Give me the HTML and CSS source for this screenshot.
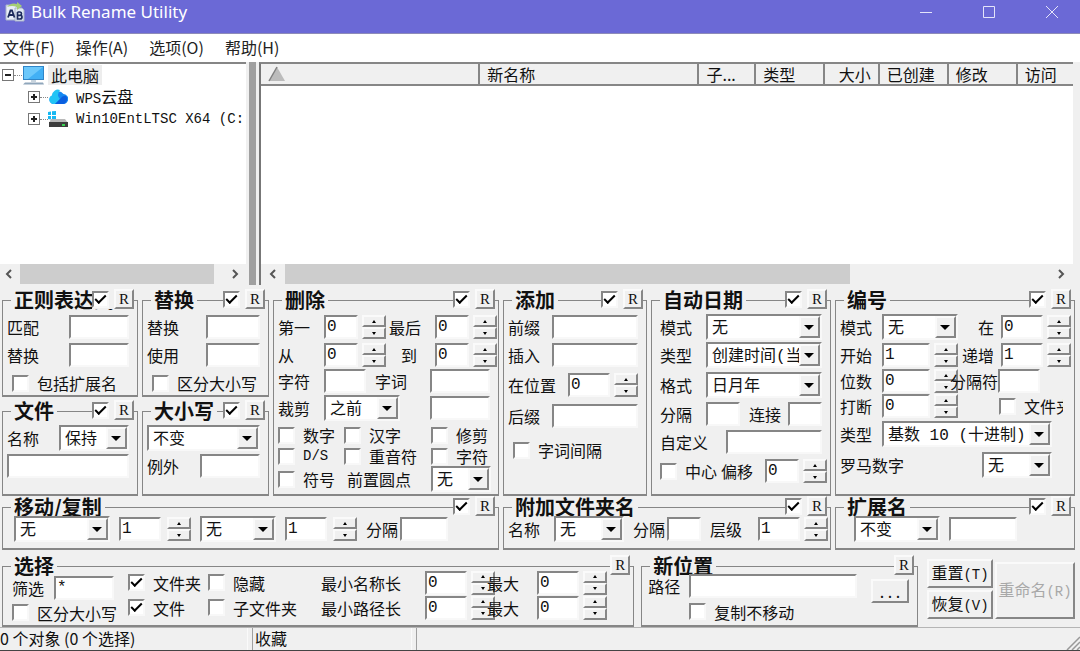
FILE: index.html
```html
<!DOCTYPE html>
<html lang="zh-CN">
<head>
  <meta charset="UTF-8">
  <title>Bulk Rename Utility</title>
  <meta name="viewport" content="width=device-width, initial-scale=1.0">
  <link rel="stylesheet" href="styles.css">
</head>
<body>
  <header class="titlebar">
    <svg class="app-icon" width="20" height="20" viewBox="0 0 20 20">
      <path d="M1 3h9l3 3v12H1z" fill="#e8eef8" stroke="#a9b4c8"/>
      <path d="M10 6h7l2 2v11h-9z" fill="#dfe7f4" stroke="#a9b4c8"/>
      <path d="M2 5Q6 0 12 2V0l5 4-5 4V5Q7 3 2 5z" fill="#a5cf74"/>
      <path d="M3 15.500L5.500 8.500h1.500L9.500 15.500M4.500 13h3.500" fill="none" stroke="#1c2b5c" stroke-width="1.800"/>
      <path d="M12.500 10v7h2.500q2 0 2-2t-2-1.700h-2.500M15 13.300q1.500 0 1.500-1.600T15 10h-2.500" fill="none" stroke="#1c2b5c" stroke-width="1.700"/>
    </svg>
    <h1 class="title">Bulk Rename Utility</h1>
    <div class="window-buttons">
      <button type="button" aria-label="最小化"><svg width="14" height="14" viewBox="0 0 14 14"><path d="M1 7.500h12"/></svg></button>
      <button type="button" aria-label="最大化"><svg width="14" height="14" viewBox="0 0 14 14"><path d="M1.500 1.500h11v11h-11z"/></svg></button>
      <button type="button" aria-label="关闭"><svg width="14" height="14" viewBox="0 0 14 14"><path d="M1 1l12 12M13 1L1 13"/></svg></button>
    </div>
  </header>

  <nav class="menu">
    <a href="#">文件(F)</a>
    <a href="#">操作(A)</a>
    <a href="#">选项(O)</a>
    <a href="#">帮助(H)</a>
  </nav>

  <main class="panes">
    <section class="tree-pane">
      <ul class="tree">
        <li>
          <span class="toggle open"></span><span class="dots"></span>
          <svg class="node-icon" width="24" height="22" viewBox="0 0 24 22">
            <path d="M1 2h21v14H1z" fill="#2f86c9"/>
            <path d="M2 3h19v12H2z" fill="#42b0f5"/>
            <path d="M2 3h19L6 15H2z" fill="#6cc8fb"/>
            <path d="M9 16h5v2H9z" fill="#c8d4de"/>
            <path d="M3 18.500h18l1 2H1z" fill="#8fa6bb"/>
          </svg>
          <span class="node selected">此电脑</span>
        </li>
        <li class="child">
          <span class="toggle"></span><span class="dots"></span>
          <svg class="node-icon" width="20" height="20" viewBox="0 0 20 20">
            <path d="M5 17a4.500 4.500 0 0 1-1-8.500A6.500 6.500 0 0 1 15.500 7 5 5 0 0 1 15 17z" fill="#1588f2"/>
            <path d="M5 17a4.500 4.500 0 0 1-1-8.500A6 6 0 0 1 12 3Q8 8 12 12L7 17z" fill="#22c4f5"/>
            <path d="M7 17l5-5q3-4 6-3a5 5 0 0 1-3 8z" fill="#0a5fe0"/>
          </svg>
          <span class="node"><span class="en">WPS</span>云盘</span>
        </li>
        <li class="child">
          <span class="toggle"></span><span class="dots"></span>
          <svg class="node-icon" width="20" height="20" viewBox="0 0 20 20">
            <path d="M0 3l3-.500v3.500H0zM4 2.300L8 2v4H4zM0 7h3v3.500L0 10zM4 7h4v4l-4-.500z" fill="#17b8f2"/>
            <path d="M3 10h14l3 4H1z" fill="#b9b9b9"/>
            <path d="M1 13h19v5H1z" fill="#3d3d3d"/>
            <path d="M14 15h3v2h-3z" fill="#39d353"/>
          </svg>
          <span class="node en">Win10EntLTSC X64 (C:)</span>
        </li>
      </ul>
      <div class="scrollbar">
        <svg width="20" height="20" viewBox="0 0 20 20"><path d="M11 6l-4 4 4 4"/></svg>
        <div class="track"><div class="thumb"></div></div>
        <svg width="20" height="20" viewBox="0 0 20 20"><path d="M7 6l4 4-4 4"/></svg>
      </div>
    </section>
    <div class="sash"></div>
    <section class="list-pane">
      <table class="files">
        <thead>
          <tr>
            <th class="col-name"><svg width="18" height="16" viewBox="0 0 18 16"><path d="M1 15L9 1l8 14z" fill="#bcbcbc"/><path d="M1 15L9 1" stroke="#808080" stroke-width="1.500"/></svg></th>
            <th class="col-new">新名称</th>
            <th class="col-sub">子...</th>
            <th class="col-type">类型</th>
            <th class="col-size">大小</th>
            <th class="col-date">已创建</th>
            <th class="col-date">修改</th>
            <th>访问</th>
          </tr>
        </thead>
      </table>
      <div class="scrollbar">
        <svg width="24" height="20" viewBox="0 0 24 20"><path d="M14 6l-4 4 4 4"/></svg>
        <div class="track"><div class="thumb wide"></div></div>
        <svg width="24" height="20" viewBox="0 0 24 20"><path d="M10 6l4 4-4 4"/></svg>
      </div>
    </section>
  </main>

  <form class="settings">
    <div class="options">
      <fieldset class="group short">
        <legend>正则表达式</legend>
        <div class="tools"><input type="checkbox" aria-label="启用正则表达式" checked><button type="button" class="reset">R</button></div>
        <div class="rows">
          <div class="row"><label for="reMatch">匹配</label><input type="text" id="reMatch" class="w60 end"></div>
          <div class="row"><label for="reReplace">替换</label><input type="text" id="reReplace" class="w60 end"></div>
          <div class="row"><label class="check indent"><input type="checkbox">包括扩展名</label></div>
        </div>
      </fieldset>

      <fieldset class="group short">
        <legend>替换</legend>
        <div class="tools"><input type="checkbox" aria-label="启用替换" checked><button type="button" class="reset">R</button></div>
        <div class="rows">
          <div class="row"><label for="repFrom">替换</label><input type="text" id="repFrom" class="w54 end"></div>
          <div class="row"><label for="repTo">使用</label><input type="text" id="repTo" class="w54 end"></div>
          <div class="row"><label class="check indent"><input type="checkbox">区分大小写</label></div>
        </div>
      </fieldset>

      <fieldset class="group tall">
        <legend>删除</legend>
        <div class="tools"><input type="checkbox" aria-label="启用删除" checked><button type="button" class="reset">R</button></div>
        <div class="rows rows-remove">
          <div class="row">
            <label for="rmFirst" class="l46">第一</label><input type="text" id="rmFirst" class="w34" value="0"><span class="spin"><button type="button" aria-label="增加"></button><button type="button" aria-label="减少"></button></span>
            <label for="rmLast" class="l46">最后</label><input type="text" id="rmLast" class="w34" value="0"><span class="spin"><button type="button" aria-label="增加"></button><button type="button" aria-label="减少"></button></span>
          </div>
          <div class="row">
            <label for="rmFrom" class="l46">从</label><input type="text" id="rmFrom" class="w34" value="0"><span class="spin"><button type="button" aria-label="增加"></button><button type="button" aria-label="减少"></button></span>
            <label for="rmTo" class="l46 push">到</label><input type="text" id="rmTo" class="w34" value="0"><span class="spin"><button type="button" aria-label="增加"></button><button type="button" aria-label="减少"></button></span>
          </div>
          <div class="row">
            <label for="rmChars" class="l46">字符</label><input type="text" id="rmChars" class="w42">
            <label for="rmWords" class="near">字词</label><input type="text" id="rmWords" class="w60 end">
          </div>
          <div class="row">
            <label for="rmCrop" class="l46">裁剪</label><span class="combo w76"><select id="rmCrop"><option>之前</option></select></span>
            <input type="text" class="w60 end" aria-label="裁剪内容">
          </div>
          <div class="row checks">
            <label class="check"><input type="checkbox">数字</label>
            <label class="check"><input type="checkbox">汉字</label>
            <label class="check"><input type="checkbox">修剪</label>
          </div>
          <div class="row checks">
            <label class="check"><input type="checkbox"><span class="en">D/S</span></label>
            <label class="check"><input type="checkbox">重音符</label>
            <label class="check"><input type="checkbox">字符</label>
          </div>
          <div class="row checks">
            <label class="check"><input type="checkbox">符号</label>
            <label for="rmDots">前置圆点</label>
            <span class="combo w60"><select id="rmDots"><option>无</option></select></span>
          </div>
        </div>
      </fieldset>

      <fieldset class="group tall">
        <legend>添加</legend>
        <div class="tools"><input type="checkbox" aria-label="启用添加" checked><button type="button" class="reset">R</button></div>
        <div class="rows rows-add">
          <div class="row"><label for="addPrefix">前缀</label><input type="text" id="addPrefix" class="w86 end"></div>
          <div class="row"><label for="addInsert">插入</label><input type="text" id="addInsert" class="w86 end"></div>
          <div class="row"><label for="addAt">在位置</label><input type="text" id="addAt" class="w42 end" value="0"><span class="spin"><button type="button" aria-label="增加"></button><button type="button" aria-label="减少"></button></span></div>
          <div class="row"><label for="addSuffix">后缀</label><input type="text" id="addSuffix" class="w86 end"></div>
          <div class="row"><label class="check indent"><input type="checkbox">字词间隔</label></div>
        </div>
      </fieldset>

      <fieldset class="group tall">
        <legend>自动日期</legend>
        <div class="tools"><input type="checkbox" aria-label="启用自动日期" checked><button type="button" class="reset">R</button></div>
        <div class="rows rows-date">
          <div class="row"><label for="dateMode" class="l46">模式</label><span class="combo grow"><select id="dateMode"><option>无</option></select></span></div>
          <div class="row"><label for="dateType" class="l46">类型</label><span class="combo grow"><select id="dateType"><option>创建时间(当前)</option></select></span></div>
          <div class="row"><label for="dateFormat" class="l46">格式</label><span class="combo grow"><select id="dateFormat"><option>日月年</option></select></span></div>
          <div class="row"><label for="dateSep" class="l46">分隔</label><input type="text" id="dateSep" class="w34"><label for="dateJoin" class="near">连接</label><input type="text" id="dateJoin" class="w34 end"></div>
          <div class="row"><label for="dateCustom">自定义</label><input type="text" id="dateCustom" class="w96 end"></div>
          <div class="row"><label class="check">  <input type="checkbox">中心</label><label for="dateOff" class="gap-left">偏移</label><input type="text" id="dateOff" class="w34 end" value="0"><span class="spin"><button type="button" aria-label="增加"></button><button type="button" aria-label="减少"></button></span></div>
        </div>
      </fieldset>

      <fieldset class="group tall">
        <legend>编号</legend>
        <div class="tools"><input type="checkbox" aria-label="启用编号" checked><button type="button" class="reset">R</button></div>
        <div class="rows rows-number">
          <div class="row">
            <label for="numMode" class="l42">模式</label><span class="combo w76"><select id="numMode"><option>无</option></select></span>
            <label for="numAt" class="end">在</label><input type="text" id="numAt" class="w42" value="0"><span class="spin"><button type="button" aria-label="增加"></button><button type="button" aria-label="减少"></button></span>
          </div>
          <div class="row">
            <label for="numStart" class="l42">开始</label><input type="text" id="numStart" class="w48" value="1"><span class="spin"><button type="button" aria-label="增加"></button><button type="button" aria-label="减少"></button></span>
            <label for="numIncr" class="end">递增</label><input type="text" id="numIncr" class="w42" value="1"><span class="spin"><button type="button" aria-label="增加"></button><button type="button" aria-label="减少"></button></span>
          </div>
          <div class="row">
            <label for="numPad" class="l42">位数</label><input type="text" id="numPad" class="w48" value="0"><span class="spin"><button type="button" aria-label="增加"></button><button type="button" aria-label="减少"></button></span>
            <label for="numSep" class="over">分隔符</label><input type="text" id="numSep" class="w42">
          </div>
          <div class="row">
            <label for="numBreak" class="l42">打断</label><input type="text" id="numBreak" class="w48" value="0"><span class="spin"><button type="button" aria-label="增加"></button><button type="button" aria-label="减少"></button></span>
            <label class="check clipped"><input type="checkbox">文件夹</label>
          </div>
          <div class="row"><label for="numType" class="l42">类型</label><span class="combo w170"><select id="numType"><option>基数 10 (十进制)</option></select></span></div>
          <div class="row"><label for="numRoman">罗马数字</label><span class="combo w70 inset"><select id="numRoman"><option>无</option></select></span></div>
        </div>
      </fieldset>

      <fieldset class="group file">
        <legend>文件</legend>
        <div class="tools"><input type="checkbox" aria-label="启用文件" checked><button type="button" class="reset">R</button></div>
        <div class="rows">
          <div class="row"><label for="fileName">名称</label><span class="combo w70 end"><select id="fileName"><option>保持</option></select></span></div>
          <div class="row"><input type="text" class="grow" aria-label="文件名称"></div>
        </div>
      </fieldset>

      <fieldset class="group case">
        <legend>大小写</legend>
        <div class="tools"><input type="checkbox" aria-label="启用大小写" checked><button type="button" class="reset">R</button></div>
        <div class="rows">
          <div class="row"><span class="combo grow"><select aria-label="大小写"><option>不变</option></select></span></div>
          <div class="row"><label for="caseExcept">例外</label><input type="text" id="caseExcept" class="w60 end"></div>
        </div>
      </fieldset>

      <fieldset class="group flat span3">
        <legend>移动/复制</legend>
        <div class="tools"><input type="checkbox" aria-label="启用移动/复制" checked><button type="button" class="reset">R</button></div>
        <div class="row wide-gap">
          <span class="combo w96"><select aria-label="移动来源"><option>无</option></select></span>
          <span class="pair"><input type="text" class="w42" aria-label="来源字符数" value="1"><span class="spin"><button type="button" aria-label="增加"></button><button type="button" aria-label="减少"></button></span></span>
          <span class="combo w76"><select aria-label="移动目标"><option>无</option></select></span>
          <span class="pair"><input type="text" class="w42" aria-label="目标位置" value="1"><span class="spin"><button type="button" aria-label="增加"></button><button type="button" aria-label="减少"></button></span></span>
          <span class="pair"><label for="moveSep">分隔</label><input type="text" id="moveSep" class="w48"></span>
        </div>
      </fieldset>

      <fieldset class="group flat span2">
        <legend>附加文件夹名</legend>
        <div class="tools"><input type="checkbox" aria-label="启用附加文件夹名" checked><button type="button" class="reset">R</button></div>
        <div class="row">
          <label for="dirName" class="l46">名称</label><span class="combo w70"><select id="dirName"><option>无</option></select></span>
          <span class="pair near"><label for="dirSep">分隔</label><input type="text" id="dirSep" class="w34"></span>
          <label for="dirLevel" class="near">层级</label><input type="text" id="dirLevel" class="w42 end" value="1"><span class="spin"><button type="button" aria-label="增加"></button><button type="button" aria-label="减少"></button></span>
        </div>
      </fieldset>

      <fieldset class="group flat extension">
        <legend>扩展名</legend>
        <div class="tools"><input type="checkbox" aria-label="启用扩展名" checked><button type="button" class="reset">R</button></div>
        <div class="row">
          <span class="combo w86"><select aria-label="扩展名"><option>不变</option></select></span>
          <input type="text" class="w68 near" aria-label="新扩展名">
        </div>
      </fieldset>
    </div>

    <div class="bottom">
      <fieldset class="group select">
        <legend>选择</legend>
        <div class="tools"><button type="button" class="reset">R</button></div>
        <div class="filters">
          <div class="filter-col first">
            <div class="row"><label for="filter" class="l42">筛选</label><input type="text" id="filter" class="w60" value="*"></div>
            <label class="check"><input type="checkbox">区分大小写</label>
          </div>
          <div class="filter-col">
            <label class="check"><input type="checkbox" checked>文件夹</label>
            <label class="check"><input type="checkbox" checked>文件</label>
          </div>
          <div class="filter-col">
            <label class="check"><input type="checkbox">隐藏</label>
            <label class="check"><input type="checkbox">子文件夹</label>
          </div>
          <div class="filter-col">
            <div class="row">
              <label for="minName" class="l104">最小名称长</label><input type="text" id="minName" class="w42" value="0"><span class="spin"><button type="button" aria-label="增加"></button><button type="button" aria-label="减少"></button></span>
              <label for="maxName" class="over l50">最大</label><input type="text" id="maxName" class="w42" value="0"><span class="spin"><button type="button" aria-label="增加"></button><button type="button" aria-label="减少"></button></span>
            </div>
            <div class="row">
              <label for="minPath" class="l104">最小路径长</label><input type="text" id="minPath" class="w42" value="0"><span class="spin"><button type="button" aria-label="增加"></button><button type="button" aria-label="减少"></button></span>
              <label for="maxPath" class="over l50">最大</label><input type="text" id="maxPath" class="w42" value="0"><span class="spin"><button type="button" aria-label="增加"></button><button type="button" aria-label="减少"></button></span>
            </div>
          </div>
        </div>
      </fieldset>

      <fieldset class="group location">
        <legend>新位置</legend>
        <div class="tools"><button type="button" class="reset">R</button></div>
        <div class="location-body">
          <label for="path">路径</label>
          <input type="text" id="path">
          <button type="button" class="btn browse">. . .</button>
          <label class="check"><input type="checkbox">复制不移动</label>
        </div>
      </fieldset>

      <div class="actions">
        <div class="action-stack">
          <button type="reset" class="btn">重置<span class="en">(T)</span></button>
          <button type="button" class="btn">恢复<span class="en">(V)</span></button>
        </div>
        <button type="submit" class="btn rename" disabled>重命名<span class="en">(R)</span></button>
      </div>
    </div>
  </form>

  <footer class="status">
    <div class="status-count">0 个对象 (0 个选择)</div>
    <div class="status-fav">收藏</div>
    <div class="status-rest">
      <svg class="grip" width="14" height="14" viewBox="0 0 14 14"><path d="M1 14L14 1M6 14l8-8M11 14l3-3" stroke="#999" stroke-width="1.500"/></svg>
    </div>
  </footer>
</body>
</html>
```

FILE: styles.css
```css
*,
*::before,
*::after {
  box-sizing: border-box;
}
body {
  margin: 0;
  min-height: 100vh;
  display: flex;
  flex-direction: column;
  overflow-x: hidden;
  background-color: #f0f0f0;
  color: #111;
  font-family: "Noto Sans CJK SC", "Liberation Sans", sans-serif;
  font-size: 16px;
  line-height: 20px;
}
button,
input,
select {
  font: inherit;
  color: inherit;
  margin: 0;
  padding: 0;
  border-radius: 0;
}
.en {
  font-family: "Liberation Mono", monospace;
  font-size: 14px;
}

/* title bar */
.titlebar {
  display: flex;
  align-items: flex-start;
  height: 34px;
  padding: 2px 1px 0 5px;
  background-color: #6b69d6;
  border-bottom: 1px solid #8d8bb8;
  color: #fff;
}
.title {
  margin: 0 auto 0 6px;
  font-family: "Noto Sans", sans-serif;
  font-size: 17px;
  font-weight: 400;
  line-height: 20px;
}
.window-buttons {
  display: flex;
  gap: 9px;
}
.window-buttons button {
  width: 54px;
  height: 20px;
  border: none;
  background: none;
}
.window-buttons svg {
  display: block;
  margin: 0 auto;
  fill: none;
  stroke: #e4e4fa;
}

/* menu */
.menu {
  display: flex;
  gap: 21px;
  height: 28px;
  padding: 3px;
  background-color: #fff;
}
.menu a {
  color: #222;
  text-decoration: none;
}

/* tree and file list */
.panes {
  flex: 1;
  display: flex;
  padding-bottom: 5px;
}
.tree-pane,
.list-pane {
  display: flex;
  flex-direction: column;
  justify-content: space-between;
  min-width: 0;
  background-color: #fff;
  border-top: 2px solid #868686;
}
.tree-pane {
  width: 246px;
}
.sash {
  width: 7px;
  margin: 0 3px;
  background-color: #a0a0a0;
}
.list-pane {
  flex: 1;
  margin-right: 7px;
  border-left: 2px solid #777;
}
.tree {
  list-style: none;
  margin: 0;
  padding: 0 0 0 2px;
  overflow: hidden;
}
.tree li {
  display: flex;
  align-items: center;
  height: 22px;
}
.tree .child {
  padding-left: 26px;
}
.toggle {
  position: relative;
  flex: none;
  width: 12px;
  height: 12px;
  border: 1px solid #777;
}
.toggle::before,
.toggle:not(.open)::after {
  content: "";
  position: absolute;
  left: 2px;
  top: 4px;
  width: 6px;
  height: 2px;
  background-color: #222;
}
.toggle:not(.open)::after {
  transform: rotate(90deg);
}
.dots {
  flex: none;
  width: 8px;
  border-top: 1px dotted #888;
}
.node-icon {
  flex: none;
}
.node {
  padding: 0 3px;
  margin-left: 2px;
  white-space: nowrap;
}
.child .node {
  margin-left: 5px;
}
.selected {
  background-color: #ededed;
}
.scrollbar {
  display: flex;
  height: 21px;
  background-color: #f0f0f0;
}
.scrollbar svg {
  flex: none;
  fill: none;
  stroke: #555;
  stroke-width: 2;
}
.track {
  flex: 1;
}
.thumb {
  width: 94%;
  height: 20px;
  background-color: #cdcdcd;
}
.thumb.wide {
  width: 74%;
}
.files {
  width: 100%;
  table-layout: fixed;
  border-collapse: separate;
  border-spacing: 0;
}
.files th {
  height: 22px;
  padding: 0 7px;
  overflow: hidden;
  white-space: nowrap;
  text-align: left;
  font-weight: 400;
  line-height: 18px;
  background-color: #f0f0f0;
  border-right: 2px solid #868686;
  border-bottom: 2px solid #868686;
}
.files th:last-child {
  border-right: none;
}
.files svg {
  display: block;
}
.files .col-name,
.files .col-new {
  width: 27%;
}
.files .col-sub {
  width: 7%;
}
.files .col-type,
.files .col-date {
  width: 8.5%;
}
.files .col-size {
  width: 6.7%;
  text-align: right;
}

/* option groups */
.options {
  display: grid;
  grid-template-columns: minmax(0, 136fr) minmax(0, 127fr) minmax(0, 226fr) minmax(0, 144fr) minmax(0, 180fr) minmax(0, 240fr);
  grid-template-rows: minmax(110px, auto) minmax(95px, auto) auto;
  gap: 1px 4px;
  padding: 0 5px 0 2px;
}
.group {
  position: relative;
  min-width: 0;
  margin: 0;
  padding: 0 8px 0 4px;
  border: 1px solid #868686;
  border-bottom-width: 2px;
}
.group.short {
  margin-bottom: 3px;
}
.group.tall {
  grid-row: span 2;
}
.group.file {
  grid-column: 1;
  grid-row: 2;
}
.group.case {
  grid-column: 2;
  grid-row: 2;
}
.group.span3 {
  grid-column: span 3;
}
.group.span3 .row {
  padding-left: 7px;
}
.group.span2 {
  grid-column: span 2;
  padding-right: 2px;
}
.group.extension .row {
  padding-left: 14px;
}
.group.flat {
  padding-bottom: 7px;
}
legend {
  margin-left: 4px;
  padding: 0 3px;
  height: 20px;
  font-size: 20px;
  font-weight: 700;
  line-height: 20px;
  white-space: nowrap;
}
.tools {
  position: absolute;
  z-index: 1;
  top: -21px;
  right: 3px;
  display: flex;
  gap: 5px;
  align-items: center;
  background-color: #f0f0f0;
}
.reset {
  width: 20px;
  height: 20px;
  border: 2px solid;
  border-color: #fafafa #868686 #868686 #fafafa;
  background-color: #f0f0f0;
  font-family: "Liberation Serif", serif;
  font-size: 15px;
  line-height: 16px;
}
.rows {
  display: grid;
  grid-auto-rows: 28px;
  padding-top: 5px;
}
.rows-remove {
  grid-template-rows: 28px 26px 27px 29px 21px 20px 24px;
}
.rows-add {
  grid-template-rows: 28px 30px 31px 34px 24px;
}
.rows-date {
  grid-template-rows: 28px 30px 29px 28px 29px 24px;
  padding-left: 4px;
}
.rows-number {
  grid-template-rows: 28px 26px 25px 28px 31px 24px;
}
.group.tall:has(.rows-remove),
.group.tall:has(.rows-number),
.group.tall:has(.rows-date) {
  padding-right: 3px;
}
.rows-date .combo,
.rows-date .end:not(:has(+ .spin)),
.rows-remove .end {
  margin-right: 5px;
}
.rows-number label.end {
  margin-right: 7px;
}
.group.short .rows {
  grid-template-rows: 28px 28px 22px;
}
.row {
  display: flex;
  align-items: center;
  height: 24px;
  min-width: 0;
}
.row label {
  flex: none;
  white-space: nowrap;
}
.row .end {
  margin-left: auto;
}
.row .near {
  margin-left: 9px;
}
.row .gap-left {
  margin-left: 4px;
}
.row .push {
  padding-left: 12px;
}
.row .over {
  position: relative;
  margin-left: -8px;
}
.wide-gap {
  gap: 9px;
}
.pair {
  display: flex;
  align-items: center;
  gap: 2px;
}
.l42 { width: 42px; }
.l46 { width: 46px; }
.l50 { width: 50px; }
.l104 { width: 104px; }

/* sunken fields */
input[type="text"],
.combo,
input[type="checkbox"] {
  border: 2px solid;
  border-color: #868686 #f8f8f8 #f8f8f8 #868686;
  background-color: #fff;
}
input[type="text"] {
  flex: none;
  min-width: 0;
  height: 24px;
  padding: 0 1px;
  font-family: "Liberation Mono", "Noto Sans CJK SC", monospace;
  outline: none;
}
.combo {
  position: relative;
  flex: none;
  height: 26px;
}
input[type="text"].grow,
.combo.grow {
  flex: 1;
}
.combo select {
  display: block;
  width: 100%;
  height: 22px;
  padding: 3px 20px 0 4px;
  border: none;
  background: none;
  appearance: none;
  font-family: "Liberation Mono", "Noto Sans CJK SC", monospace;
  outline: none;
}
.combo::before {
  content: "";
  position: absolute;
  top: 0;
  right: 0;
  width: 21px;
  height: 22px;
  border: 2px solid;
  border-color: #fafafa #868686 #868686 #fafafa;
  background-color: #f0f0f0;
  pointer-events: none;
}
.combo::after {
  content: "";
  position: absolute;
  top: 9px;
  right: 6px;
  border: 5px solid transparent;
  border-top-color: #000;
  border-bottom: none;
  pointer-events: none;
}
.w34 { width: 34px; }
.w42 { width: 42px; }
.w48 { width: 48px; }
.w54 { width: 54px; }
.w60 { width: 60px; }
.w68 { width: 68px; }
.w70 { width: 70px; }
.w76 { width: 76px; }
.w86 { width: 86px; }
.w96 { width: 96px; }
.w170 { width: 170px; }
.combo.inset {
  margin-left: auto;
  margin-right: 19px;
}

/* spin buttons */
.spin {
  flex: none;
  display: flex;
  flex-direction: column;
  width: 24px;
  height: 24px;
  margin-left: 4px;
}
.rows-remove .spin {
  margin-right: 3px;
}
.rows-remove .spin:last-child {
  margin-right: 0;
}
.spin button {
  display: flex;
  align-items: center;
  justify-content: center;
  height: 12px;
  border: 2px solid;
  border-color: #fafafa #868686 #868686 #fafafa;
  background-color: #f0f0f0;
}
.spin button::after {
  content: "";
  border: 2px solid transparent;
  border-top: none;
  border-bottom: 3px solid #000;
}
.spin button:last-child::after {
  transform: rotate(180deg);
}

/* tick boxes */
input[type="checkbox"] {
  appearance: none;
  position: relative;
  flex: none;
  width: 17px;
  height: 17px;
}
input[type="checkbox"]:checked::after {
  content: "";
  position: absolute;
  left: 1px;
  top: 2px;
  width: 11px;
  height: 6px;
  border: solid #000;
  border-width: 0 0 2px 2px;
  transform: rotate(-45deg);
}
.check {
  display: flex;
  align-items: center;
  gap: 8px;
  white-space: nowrap;
}
.check.indent {
  margin-left: 5px;
}
.check.clipped {
  width: 64px;
  margin-left: auto;
  margin-right: 8px;
  overflow: hidden;
}
.row.checks {
  display: grid;
  grid-template-columns: 66px 87px 1fr;
  height: 20px;
}
.row.checks > label:not(.check) {
  padding-left: 3px;
}

/* bottom line */
.bottom {
  display: flex;
  gap: 7px;
  margin-top: 6px;
  padding: 0 5px 0 2px;
}
.select {
  flex: 640;
}
.filters {
  display: flex;
  margin-top: -6px;
  padding-left: 5px;
}
.filter-col {
  display: grid;
  grid-auto-rows: 25px;
  align-items: center;
  width: 80px;
}
.filter-col:nth-child(3) {
  width: 113px;
}
.filter-col:last-child {
  flex: 1;
}
.filter-col.first {
  width: 116px;
  padding-top: 5px;
}
.location {
  flex: 272;
}
.location-body {
  display: grid;
  grid-template-columns: 33px 1fr 44px;
  grid-template-rows: 24px 27px;
  column-gap: 8px;
  align-items: center;
  margin-top: -2px;
  padding-left: 2px;
}
.location-body input[type="text"] {
  width: 100%;
}
.location-body .check {
  grid-column: 2;
}
.btn {
  border: 2px solid;
  border-color: #fafafa #868686 #868686 #fafafa;
  background-color: #f0f0f0;
  white-space: nowrap;
}
.browse {
  width: 38px;
  height: 24px;
  margin: 10px 0 0 6px;
  line-height: 16px;
}
.actions {
  display: flex;
  align-items: flex-end;
  gap: 2px;
  margin: 0 0 8px 2px;
}
.action-stack {
  display: flex;
  flex-direction: column;
  gap: 2px;
}
.action-stack .btn {
  width: 66px;
  height: 29px;
}
.btn.rename {
  width: 80px;
  height: 57px;
  color: #a8a8a8;
}

/* status bar */
.status {
  display: flex;
  gap: 4px;
  height: 24px;
  border-top: 1px solid #b5b5b5;
  border-bottom: 1px solid #444;
  line-height: 20px;
}
.status-count {
  width: 248px;
  border-right: 1px solid #fafafa;
}
.status-fav {
  width: 160px;
  padding-left: 2px;
  border-left: 1px solid #a0a0a0;
  border-right: 1px solid #fafafa;
}
.status-rest {
  flex: 1;
  display: flex;
  justify-content: flex-end;
  align-items: flex-end;
  border-left: 1px solid #a0a0a0;
}
```
